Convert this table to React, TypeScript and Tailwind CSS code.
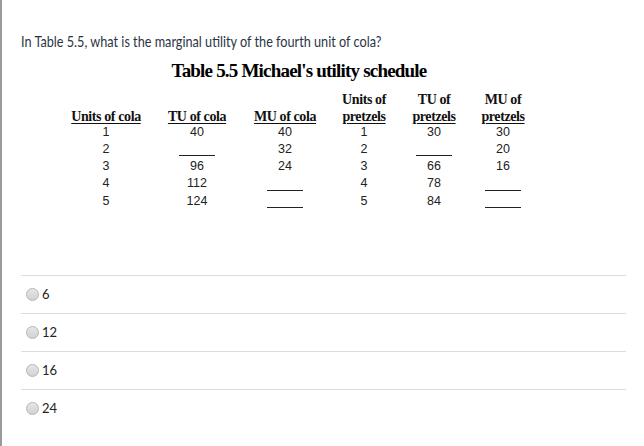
// Quiz question card: prompt, a utility-schedule table, and radio answers.
const serif = "font-['Liberation_Serif','Times_New_Roman',serif]";
const sans = "font-['Liberation_Sans',Arial,sans-serif]";

type Cell = string | null;

const rows: Cell[][] = [
	["1", "40", "40", "1", "30", "30"],
	["2", null, "32", "2", null, "20"],
	["3", "96", "24", "3", "66", "16"],
	["4", "112", null, "4", "78", null],
	["5", "124", null, "5", "84", null],
];

const headers: [string | null, string][] = [
	[null, "Units of cola"],
	[null, "TU of cola"],
	[null, "MU of cola"],
	["Units of", "pretzels"],
	["TU of", "pretzels"],
	["MU of", "pretzels"],
];

const options = ["6", "12", "16", "24"];

function UtilityTable() {
	return (
		<div className="flex flex-col">
			<div
				className={`${serif} pr-[49px] text-center text-[19px] font-bold leading-[20px] tracking-[-0.8px] text-black`}
			>
				Table 5.5 Michael's utility schedule
			</div>
			<div
				className={`ml-[45px] mt-[10px] grid grid-cols-[80px_102px_74px_84px_56px_82px] ${serif} text-[14px] leading-[17px] font-bold tracking-[-0.4px] text-[#111]`}
			>
				{headers.map(([top, bottom], i) => (
					<div key={i} className="flex flex-col items-center justify-end">
						{top ? <span className="h-[17px]">{top}</span> : null}
						<span className="h-[15px] underline decoration-1 underline-offset-[2px]">
							{bottom}
						</span>
					</div>
				))}
				{rows.map((row, r) =>
					row.map((cell, c) => (
						<div
							key={`${r}-${c}`}
							className={`flex h-[17.25px] items-center justify-center ${sans} text-[12.5px] leading-[14px] font-normal tracking-normal text-[#222]`}
						>
							{cell ?? (
								<span className="mt-[14px] block h-px w-[36px] bg-[#222]" />
							)}
						</div>
					)),
				)}
			</div>
		</div>
	);
}

export default function App() {
	return (
		<div className="flex h-[446px] w-[644px] bg-white">
			<div className="w-[2px] bg-[#9a9a9a]" />
			<div className="flex flex-1 flex-col pl-[19px] pr-[18px]">
				<p className="mt-[32px] origin-left scale-x-[0.845] whitespace-nowrap font-['Lato',sans-serif] text-[15px] leading-[18px] text-[#2a3544]">
					In Table 5.5, what is the marginal utility of the fourth unit of cola?
				</p>
				<div className="mt-[11px]">
					<UtilityTable />
				</div>
				<div className="mt-[66px] flex flex-col">
					{options.map((opt) => (
						<label
							key={opt}
							className="flex h-[38px] items-center gap-[3px] border-t border-[#dcdcdc] pl-[5px]"
						>
							<span className="h-[13px] w-[13px] rounded-full border border-[#b5b5b5] bg-gradient-to-b from-[#e6e6e6] to-[#d2d2d2]" />
							<span className="font-['Lato',sans-serif] text-[13px] text-[#222]">
								{opt}
							</span>
						</label>
					))}
				</div>
			</div>
		</div>
	);
}
